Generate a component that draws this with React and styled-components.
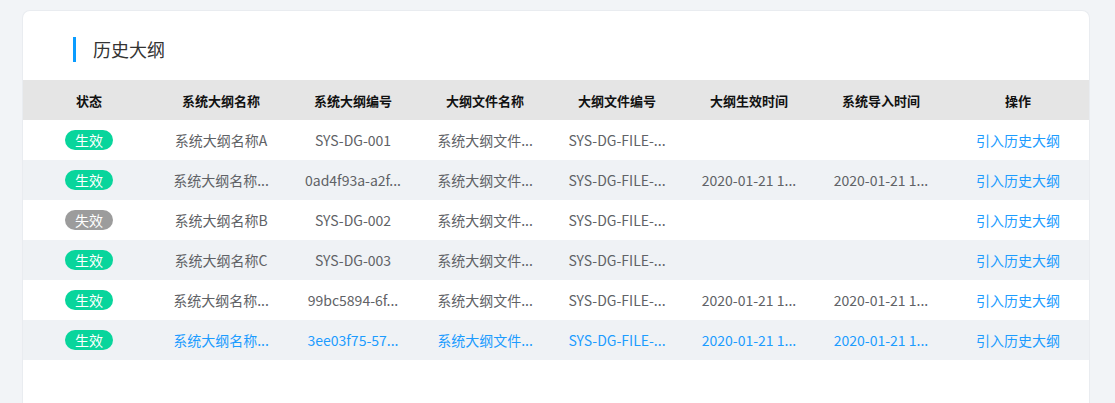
import React from "react";
import styled, { createGlobalStyle } from "styled-components";

const Global = createGlobalStyle`
  html, body { margin: 0; padding: 0; background: #f2f4f7; }
  body { font-family: "Noto Sans CJK SC", "Noto Sans", sans-serif; }
`;

const Page = styled.div`
  padding: 10px 25px 0 22px;
  height: 403px;
  box-sizing: border-box;
  overflow: hidden;
`;

const Card = styled.div`
  background: #fff;
  border: 1px solid #e9ecf0;
  border-bottom: none;
  border-radius: 8px 8px 0 0;
  height: 420px;
`;

const TitleBar = styled.div`
  height: 69px;
  padding: 26px 0 0 50px;
  box-sizing: border-box;
`;

const Title = styled.h2`
  margin: 0;
  font-weight: 400;
  font-size: 18px;
  color: #333;
  border-left: 3px solid #0a9cff;
  padding-left: 17px;
  height: 25px;
  line-height: 25px;
`;

const Row = styled.div`
  display: grid;
  grid-template-columns: repeat(7, 132px) 1fr;
  height: 40px;
  align-items: center;
  background: ${(p) => (p.$head ? "#e5e5e5" : p.$stripe ? "#eff2f5" : "#fff")};
`;

const HeadCell = styled.div`
  text-align: center;
  font-size: 13px;
  font-weight: 700;
  color: #111;
`;

const Cell = styled.div`
  padding: 0 8px;
  text-align: center;
  font-size: 14px;
  color: ${(p) => (p.$active ? "#1c9cff" : "#606266")};
  white-space: nowrap;
  overflow: hidden;
  text-overflow: ellipsis;
`;

const Badge = styled.span`
  display: inline-block;
  width: 48px;
  height: 20px;
  line-height: 20px;
  border-radius: 10px;
  font-size: 14px;
  color: #fff;
  background: ${(p) => (p.$on ? "#08d59c" : "#9c9c9c")};
  text-align: center;
`;

const Link = styled.a`
  color: #1c9cff;
  font-size: 14px;
  text-decoration: none;
  cursor: pointer;
`;

const heads = ["状态", "系统大纲名称", "系统大纲编号", "大纲文件名称", "大纲文件编号", "大纲生效时间", "系统导入时间", "操作"];

const rows = [
  { on: true, name: "系统大纲名称A", code: "SYS-DG-001", file: "系统大纲文件...", fcode: "SYS-DG-FILE-...", t1: "", t2: "" },
  { on: true, name: "系统大纲名称...", code: "0ad4f93a-a2f...", file: "系统大纲文件...", fcode: "SYS-DG-FILE-...", t1: "2020-01-21 1...", t2: "2020-01-21 1..." },
  { on: false, name: "系统大纲名称B", code: "SYS-DG-002", file: "系统大纲文件...", fcode: "SYS-DG-FILE-...", t1: "", t2: "" },
  { on: true, name: "系统大纲名称C", code: "SYS-DG-003", file: "系统大纲文件...", fcode: "SYS-DG-FILE-...", t1: "", t2: "" },
  { on: true, name: "系统大纲名称...", code: "99bc5894-6f...", file: "系统大纲文件...", fcode: "SYS-DG-FILE-...", t1: "2020-01-21 1...", t2: "2020-01-21 1..." },
  { on: true, active: true, name: "系统大纲名称...", code: "3ee03f75-57...", file: "系统大纲文件...", fcode: "SYS-DG-FILE-...", t1: "2020-01-21 1...", t2: "2020-01-21 1..." },
];

export default function App() {
  return (
    <>
      <Global />
      <Page>
        <Card>
          <TitleBar>
            <Title>历史大纲</Title>
          </TitleBar>
          <Row $head>
            {heads.map((h) => (
              <HeadCell key={h}>{h}</HeadCell>
            ))}
          </Row>
          {rows.map((r, i) => (
            <Row key={i} $stripe={i % 2 === 1}>
              <Cell>
                <Badge $on={r.on}>{r.on ? "生效" : "失效"}</Badge>
              </Cell>
              <Cell $active={r.active}>{r.name}</Cell>
              <Cell $active={r.active}>{r.code}</Cell>
              <Cell $active={r.active}>{r.file}</Cell>
              <Cell $active={r.active}>{r.fcode}</Cell>
              <Cell $active={r.active}>{r.t1}</Cell>
              <Cell $active={r.active}>{r.t2}</Cell>
              <Cell>
                <Link>引入历史大纲</Link>
              </Cell>
            </Row>
          ))}
        </Card>
      </Page>
    </>
  );
}
